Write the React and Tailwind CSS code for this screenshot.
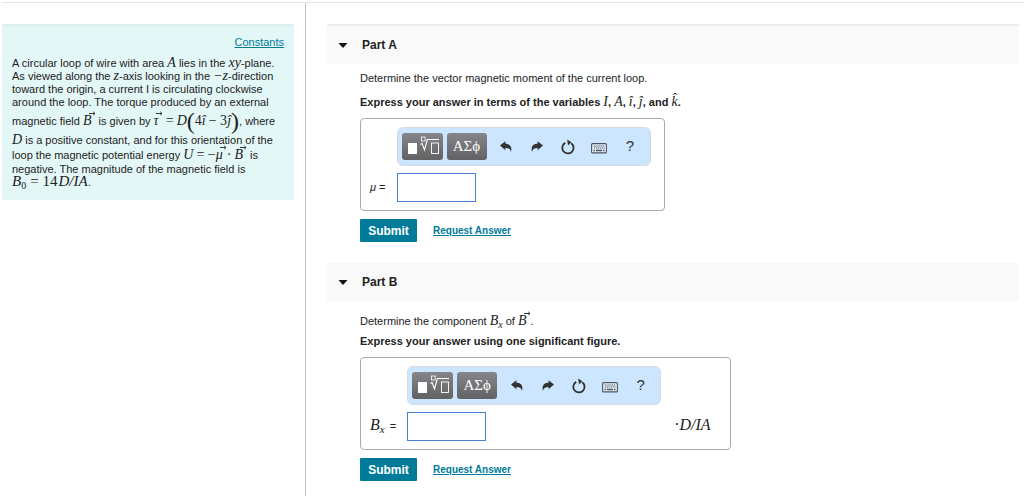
import React, { useId, useState } from 'react';

const M = ({ children, size = 'text-[14px]', className = '' }) => (
  <i className={`font-['Liberation_Serif',serif] leading-0 font-normal ${size} ${className}`}>{children}</i>
);

const N = ({ children, size, className = '' }) => <M size={size} className={`not-italic ${className}`}>{children}</M>;

// letter with a vector arrow over its right shoulder
const Vec = ({ children }) => (
  <span className="relative pr-1">
    <M>{children}</M>
    <svg className="absolute -top-1 right-0 h-[5px] w-[7px]" viewBox="0 0 7 5" fill="none" stroke="currentColor" aria-hidden="true">
      <path d="M0 2.5h6M4.2 .8 6 2.5 4.2 4.2" strokeWidth=".9" />
    </svg>
  </span>
);

// big parenthesis around an expression
const Paren = ({ children }) => (
  <span className="font-['Liberation_Serif',serif] text-[24px] leading-0 align-[-4px]">{children}</span>
);

const FormulaIcon = () => (
  <svg className="h-[27px] w-full" viewBox="0 0 41 27" fill="none" stroke="#fff" aria-hidden="true">
    <rect x="6" y="10" width="9" height="11" fill="#fff" stroke="none" />
    <rect x="19.5" y="4" width="3.6" height="4" strokeWidth=".8" />
    <path d="M18.5 11.5l1.6-1 2.4 6.5 2.8-10.5H37" strokeWidth="1.1" />
    <rect x="29.5" y="10" width="7" height="10.5" strokeWidth=".9" />
  </svg>
);

const UndoIcon = ({ flip }) => (
  <svg className={`h-[11px] w-[12px] ${flip ? '-scale-x-100' : ''}`} viewBox="0 0 12 11" fill="#333" aria-hidden="true">
    <path d="M0 4.5 5.4.2v2.6C9.6 2.8 12.4 5.3 11 11c-.5-2.6-2-4-5.6-4v2.3z" />
  </svg>
);

const ResetIcon = () => (
  <svg className="h-[16px] w-[14px]" viewBox="0 0 14 16" fill="none" stroke="#333" aria-hidden="true">
    <path d="M10.2 4.3A5.6 5.6 0 1 1 4.3 3.9" strokeWidth="1.8" />
    <path d="M6.2.4 10.4 3.2 7 6.4z" fill="#333" stroke="none" />
  </svg>
);

const KeyboardIcon = () => (
  <svg className="mt-[3px] h-[11px] w-[16px]" viewBox="0 0 16 11" fill="none" stroke="#4b5563" aria-hidden="true">
    <rect x=".6" y=".6" width="14.8" height="9.3" rx="1" strokeWidth="1.1" fill="#e8f0f8" />
    <path d="M2.5 3h11M3 5h10.5" strokeWidth="1.2" strokeDasharray="1.2 .7" />
    <path d="M2.5 7.5h1.5M5 7.5h6M12 7.5h1.5" strokeWidth="1.3" />
  </svg>
);

const ToolButton = ({ label, children }) => (
  <button type="button" aria-label={label} className="flex h-[27px] w-[31px] items-center justify-center">
    {children}
  </button>
);

const darkButton = 'flex h-[27px] items-center justify-center rounded-[3px] bg-linear-to-b from-[#86868a] to-[#626264] text-white';

const Toolbar = () => (
  <div className="flex w-fit items-center gap-1 rounded-md border border-[#d5dbe0] bg-[#cce6ff] py-[5px] pr-1 pl-1">
    <button type="button" aria-label="Templates" className={`${darkButton} w-[41px]`}>
      <FormulaIcon />
    </button>
    <button type="button" className={`${darkButton} w-10 font-['Liberation_Serif',serif] text-[15px]`}>
      ΑΣϕ
    </button>
    <div className="flex">
      <ToolButton label="Undo"><UndoIcon /></ToolButton>
      <ToolButton label="Redo"><UndoIcon flip /></ToolButton>
      <ToolButton label="Reset"><ResetIcon /></ToolButton>
      <ToolButton label="Keyboard shortcuts"><KeyboardIcon /></ToolButton>
      <ToolButton label="Help"><span className="text-[15px] text-[#333]">?</span></ToolButton>
    </div>
  </div>
);

const AnswerBox = ({ label, unit }) => {
  const id = useId();
  const [value, setValue] = useState('');

  return (
    <div className="grid w-fit grid-cols-[auto_auto_auto] items-center gap-y-[7px] rounded border border-[#aaa] py-2 pr-[13px] pl-[9px]">
      <div className="col-start-2"><Toolbar /></div>
      <label htmlFor={id} className="col-start-1 pr-[11px] whitespace-nowrap">{label}</label>
      <input
        id={id}
        type="text"
        value={value}
        onChange={(e) => setValue(e.target.value)}
        className="h-[29px] w-[79px] border border-[#4a80d0] bg-white px-1 outline-none"
      />
      {unit && <div className="pr-[6px] pl-[13px]">{unit}</div>}
    </div>
  );
};

const Part = ({ title, question, instruction, label, unit, first }) => {
  const [open, setOpen] = useState(true);

  return (
    <section className="mb-[21px]">
      <h2 className={`bg-[#f9f9f9] ${first ? 'border-t-2 border-[#eee]' : ''}`}>
        <button
          type="button"
          onClick={() => setOpen(!open)}
          className="flex h-[38px] w-full items-center gap-[14px] pl-[11px] text-[12px] font-bold text-[#222]"
        >
          <svg className={`h-[5px] w-[10px] ${open ? '' : '-rotate-90'}`} viewBox="0 0 10 5" fill="#111" aria-hidden="true">
            <path d="M.5 0h9L5 5z" />
          </svg>
          {title}
        </button>
      </h2>
      {open && (
        <div className="pl-[33px]">
          {question}
          <p className="mb-2 leading-4 font-bold">{instruction}</p>
          <AnswerBox label={label} unit={unit} />
          <div className="mt-2 flex items-center gap-4">
            <button type="button" className="h-[23px] w-[57px] rounded-[1px] bg-[#007a99] text-[12px] font-bold text-white">
              Submit
            </button>
            <a href="#answer" className="text-[10px] font-bold text-[#007a99] underline underline-offset-1">Request Answer</a>
          </div>
        </div>
      )}
    </section>
  );
};

const Problem = () => (
  <div className="leading-[13px] whitespace-nowrap">
    <p>A circular loop of wire with area <M>A</M> lies in the <M>xy</M>-plane.</p>
    <p>As viewed along the <M>z</M>-axis looking in the <M>−z</M>-direction</p>
    <p>toward the origin, a current I is circulating clockwise</p>
    <p>around the loop. The torque produced by an external</p>
    <p className="leading-6">
      magnetic field <Vec>B</Vec> is given by <Vec>τ</Vec> <N>=</N> <M>D</M>
      <Paren>(</Paren><N>4</N><M>î</M> <N>− 3</N><M>ĵ</M><Paren>)</Paren>, where
    </p>
    <p className="leading-[14px]"><M>D</M> is a positive constant, and for this orientation of the</p>
    <p className="leading-4">
      loop the magnetic potential energy <M>U</M> <N>= −</N><Vec>μ</Vec><N>·</N> <Vec>B</Vec> is
    </p>
    <p>negative. The magnitude of the magnetic field is</p>
    <p>
      <M size="text-[15px]">B</M><N><sub className="text-[10px]">0</sub></N>{' '}
      <N size="text-[15px]" className="px-px">= 14</N><M size="text-[15px]">D/IA</M>.
    </p>
  </div>
);

export default function App() {
  return (
    <div className="min-h-screen bg-white pt-[2px] pl-[2px] font-['Liberation_Sans',Arial,sans-serif] text-[11px] text-[#222]">
      <div className="flex min-h-[calc(100vh-2px)] border-t border-[#e5e5e5]">
        <aside className="w-[304px] shrink-0 border-r border-[#b9c4cf] pt-[21px] pr-[11px]">
          <div className="border-t-2 border-[#e0eeee] bg-[#e4f7f7] px-[10px] pt-[9px] pb-[11px]">
            <div className="mb-2 text-right leading-[14px]">
              <a href="#constants" className="text-[#007a99] underline underline-offset-1">Constants</a>
            </div>
            <Problem />
          </div>
        </aside>
        <main className="min-w-0 flex-1 pt-[21px] pr-[5px] pl-[21px]">
          <Part
            first
            title="Part A"
            question={<p className="mt-[6px] mb-2 leading-4">Determine the vector magnetic moment of the current loop.</p>}
            instruction={<>Express your answer in terms of the variables <M>I</M>, <M>A</M>, <M>î</M>, <M>ĵ</M>, and <M>k̂</M>.</>}
            label={<><i>μ</i> =</>}
          />
          <Part
            title="Part B"
            question={<p className="mt-3 mb-1 leading-4">Determine the component <M>B<sub className="text-[10px]">x</sub></M> of <Vec>B</Vec>.</p>}
            instruction="Express your answer using one significant figure."
            label={<><M size="text-[16px]">B<sub className="pr-[2px] text-[11px]">x</sub></M> =</>}
            unit={<><N size="text-[16px]">·</N><M size="text-[16px]">D/IA</M></>}
          />
        </main>
      </div>
    </div>
  );
}
